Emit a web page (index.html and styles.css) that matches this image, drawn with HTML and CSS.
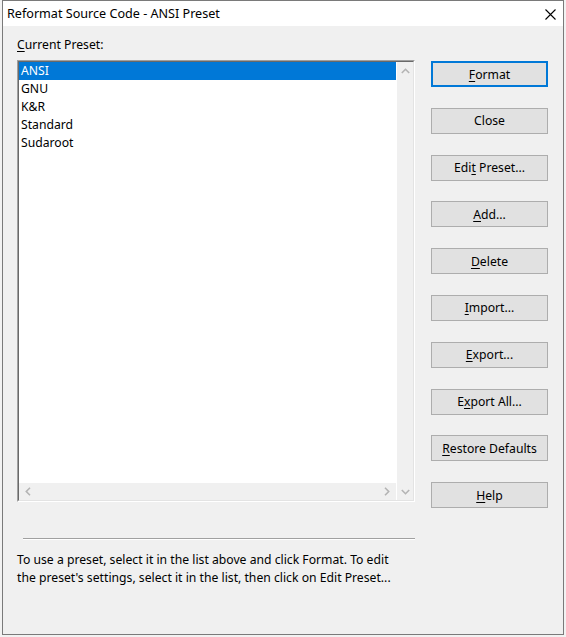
FILE: index.html
```html
<!DOCTYPE html>
<html>
<head>
<meta charset="utf-8">
<link rel="stylesheet" href="styles.css">
</head>
<body>
<div class="window">
  <div class="titlebar">
    <span class="title">Reformat Source Code - ANSI Preset</span>
    <span class="close"><svg width="11" height="11" viewBox="0 0 11 11"><path d="M0.5 0.5L10.5 10.5M10.5 0.5L0.5 10.5" stroke="#000" stroke-width="1.1" fill="none"/></svg></span>
  </div>
  <div class="main">
    <div class="left">
      <div class="label"><u>C</u>urrent Preset:</div>
      <div class="listbox">
        <div class="listinner">
          <div class="items">
            <div class="item selected">ANSI</div>
            <div class="item">GNU</div>
            <div class="item">K&amp;R</div>
            <div class="item">Standard</div>
            <div class="item">Sudaroot</div>
          </div>
          <div class="vscroll">
            <svg class="arrow" width="9" height="6" viewBox="0 0 9 6"><path d="M0.8 5L4.5 1.3L8.2 5" stroke="#b4b4b4" stroke-width="1.6" fill="none"/></svg>
            <svg class="arrow" width="9" height="6" viewBox="0 0 9 6"><path d="M0.8 1L4.5 4.7L8.2 1" stroke="#b4b4b4" stroke-width="1.6" fill="none"/></svg>
          </div>
          <div class="hscroll">
            <svg class="arrow" width="6" height="9" viewBox="0 0 6 9"><path d="M5 0.8L1.3 4.5L5 8.2" stroke="#b4b4b4" stroke-width="1.6" fill="none"/></svg>
            <svg class="arrow" width="6" height="9" viewBox="0 0 6 9"><path d="M1 0.8L4.7 4.5L1 8.2" stroke="#b4b4b4" stroke-width="1.6" fill="none"/></svg>
          </div>
        </div>
      </div>
    </div>
    <div class="buttons">
      <div class="btn default"><span><u>F</u>ormat</span></div>
      <div class="btn"><span>Close</span></div>
      <div class="btn"><span>Edi<u>t</u> Preset...</span></div>
      <div class="btn"><span><u>A</u>dd...</span></div>
      <div class="btn"><span><u>D</u>elete</span></div>
      <div class="btn"><span><u>I</u>mport...</span></div>
      <div class="btn"><span><u>E</u>xport...</span></div>
      <div class="btn"><span>E<u>x</u>port All...</span></div>
      <div class="btn"><span><u>R</u>estore Defaults</span></div>
      <div class="btn"><span><u>H</u>elp</span></div>
    </div>
  </div>
  <div class="separator"></div>
  <p class="hint">To use a preset, select it in the list above and click Format. To edit<br>the preset's settings, select it in the list, then click on Edit Preset...</p>
</div>
</body>
</html>
```
FILE: styles.css
```css
* { box-sizing: border-box; }
html, body {
  margin: 0;
  padding: 0;
  background: #f2f2f2;
  font-family: "Noto Sans", "Noto Sans CJK SC", sans-serif;
  font-size: 12.2px;
  color: #000;
}
u { text-decoration: underline; text-underline-offset: 2px; }
.window {
  margin-left: 2px;
  width: 562px;
  height: 635px;
  border: 1px solid #7a7a7a;
  background: #f0f0f0;
  display: flex;
  flex-direction: column;
}
.titlebar {
  height: 25px;
  background: #fff;
  display: flex;
  align-items: center;
  justify-content: space-between;
  padding: 0 7px 0 4px;
  flex: none;
}
.title { font-size: 12.6px; line-height: 17px; }
.close { display: flex; width: 11px; height: 11px; margin-top: 1px; }
.main {
  display: flex;
  padding: 10px 0 0 14px;
}
.left { width: 398px; }
.label { line-height: 17px; height: 17px; margin-bottom: 7px; }
.listbox {
  height: 442px;
  border: 1px solid;
  border-color: #a0a0a0 #ffffff #ffffff #a0a0a0;
}
.listinner {
  height: 100%;
  border: 1px solid;
  border-color: #696969 #e3e3e3 #e3e3e3 #696969;
  display: grid;
  grid-template-columns: 1fr 17px;
  grid-template-rows: 1fr 17px;
  background: #fff;
}
.items { grid-column: 1; grid-row: 1; background: #fff; }
.item { height: 18px; line-height: 18px; padding-left: 2px; }
.item.selected { background: #0078d7; color: #fff; }
.vscroll {
  grid-column: 2;
  grid-row: 1 / 3;
  background: #f0f0f0;
  border-left: 1px solid #fff;
  display: flex;
  flex-direction: column;
  justify-content: space-between;
  align-items: center;
  padding: 6px 0 5px;
}
.hscroll {
  grid-column: 1;
  grid-row: 2;
  background: #f0f0f0;
  display: flex;
  justify-content: space-between;
  align-items: center;
  padding: 0 6px;
}
.arrow { display: block; }
.buttons {
  margin-left: 16px;
  margin-top: 25px;
  width: 117px;
  display: flex;
  flex-direction: column;
  gap: 20.8px;
}
.btn {
  height: 26px;
  border: 1px solid #adadad;
  background: #e1e1e1;
  display: flex;
  align-items: center;
  justify-content: center;
  line-height: 17px;
}
.btn.default { border: 2px solid #0078d7; }
.separator {
  margin: 30px 0 0 20px;
  width: 392px;
  height: 2px;
  border-top: 1px solid #a0a0a0;
  border-bottom: 1px solid #fff;
}
.hint {
  margin: 11px 0 0 14px;
  line-height: 17.5px;
}
```
